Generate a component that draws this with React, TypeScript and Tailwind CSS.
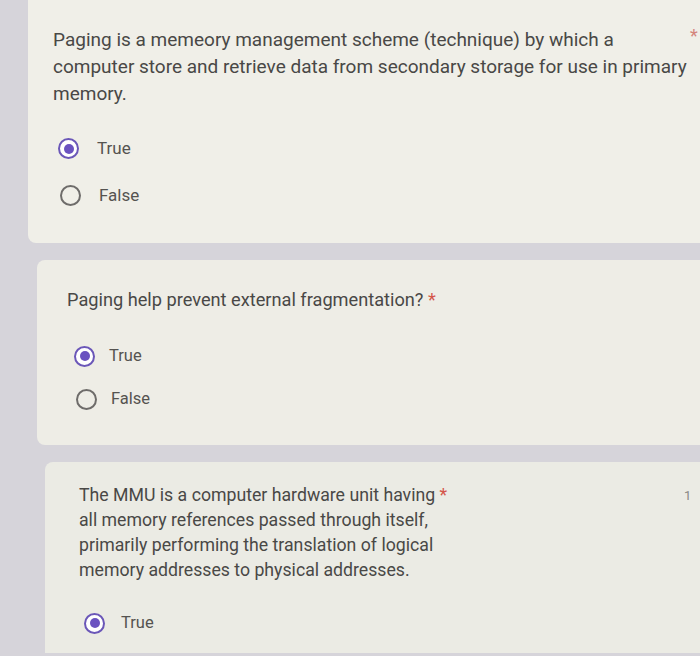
import React from "react";

const font = { fontFamily: "Roboto, 'Noto Sans', Arial, sans-serif" };

function Radio({ checked }: { checked: boolean }) {
  if (checked) {
    return (
      <span className="flex h-[21px] w-[21px] shrink-0 items-center justify-center rounded-full border-[2.5px] border-[#6b57b8] bg-white">
        <span className="h-[10px] w-[10px] rounded-full bg-[#6a52c0]" />
      </span>
    );
  }
  return (
    <span className="h-[21px] w-[21px] shrink-0 rounded-full border-2 border-[#6e6c6a]" />
  );
}

function Option({
  label,
  checked,
  indent,
  gap,
  size,
}: {
  label: string;
  checked: boolean;
  indent: string;
  gap: string;
  size: string;
}) {
  return (
    <div className={`flex items-center ${indent} ${gap}`}>
      <Radio checked={checked} />
      <span className={`${size} text-[#555350]`}>{label}</span>
    </div>
  );
}

export default function App() {
  return (
    <div
      className="h-[656px] w-[700px] overflow-hidden bg-[#d6d4da]"
      style={font}
    >
      {/* question 1 */}
      <div className="ml-[28px] mr-[-20px] h-[243px] rounded-b-lg bg-[#f0efe8] pl-[25px] pt-[26px]">
        <div className="flex">
          <p className="w-[640px] text-[19px] leading-[27px] text-[#494846]">
            Paging is a memeory management scheme (technique) by which a
            <br />
            computer store and retrieve data from secondary storage for use in primary
            <br />
            memory.
          </p>
          <span className="ml-[-3px] text-[18px] leading-[20px] text-[#d4857c]">*</span>
        </div>
        <div className="mt-[29px] flex flex-col gap-[21px]">
          <Option label="True" checked indent="ml-[5px]" gap="gap-[18px]" size="text-[17px]" />
          <Option label="False" checked={false} indent="ml-[7px]" gap="gap-[18px]" size="text-[17px]" />
        </div>
      </div>

      {/* question 2 */}
      <div className="ml-[37px] mr-[-20px] mt-[17px] h-[185px] rounded-lg bg-[#eeede6] pl-[30px] pt-[27px]">
        <p className="text-[18.2px] leading-[26px] text-[#494846]">
          Paging help prevent external fragmentation?{" "}
          <span className="text-[#d4554a]">*</span>
        </p>
        <div className="mt-[31px] flex flex-col gap-[18px]">
          <Option label="True" checked indent="ml-[7px]" gap="gap-[14px]" size="text-[16.5px]" />
          <Option label="False" checked={false} indent="ml-[9px]" gap="gap-[14px]" size="text-[16.5px]" />
        </div>
      </div>

      {/* question 3 */}
      <div className="ml-[45px] mr-[-20px] mt-[17px] h-[191px] rounded-t-lg bg-[#ebebe4] pl-[34px] pt-[21px]">
        <div className="flex">
          <p className="w-[570px] text-[17.7px] leading-[25px] text-[#494846]">
            The MMU is a computer hardware unit having{" "}
            <span className="text-[#d4554a]">*</span>
            <br />
            all memory references passed through itself,
            <br />
            primarily performing the translation of logical
            <br />
            memory addresses to physical addresses.
          </p>
          <span className="ml-[35px] text-[13px] leading-[25px] text-[#8a8884]">1</span>
        </div>
        <div className="mt-[28px] flex flex-col gap-[20px]">
          <Option label="True" checked indent="ml-[5px]" gap="gap-[16px]" size="text-[16.5px]" />
          <Option label="False" checked={false} indent="ml-[7px]" gap="gap-[16px]" size="text-[16.5px]" />
        </div>
      </div>
    </div>
  );
}
